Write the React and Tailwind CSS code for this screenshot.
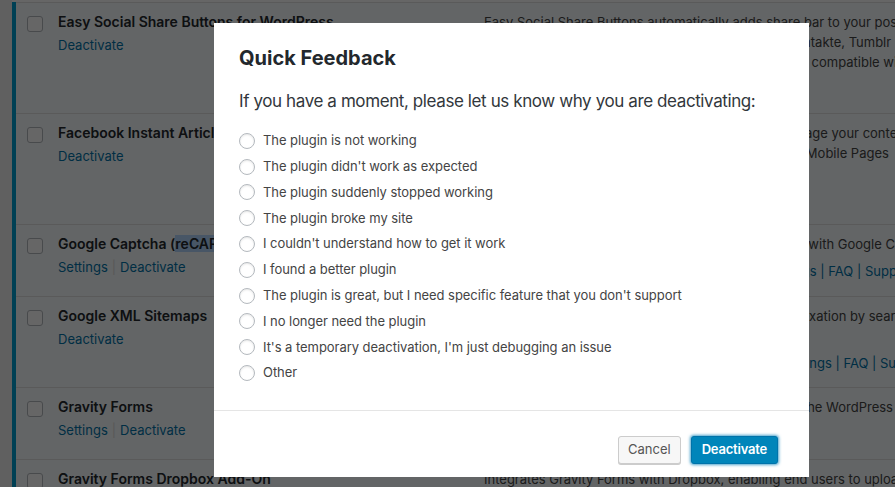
import { useState } from 'react';

const reasons = [
  "The plugin is not working",
  "The plugin didn't work as expected",
  "The plugin suddenly stopped working",
  "The plugin broke my site",
  "I couldn't understand how to get it work",
  "I found a better plugin",
  "The plugin is great, but I need specific feature that you don't support",
  "I no longer need the plugin",
  "It's a temporary deactivation, I'm just debugging an issue",
  "Other",
];

const plugins = [
  {
    name: 'Easy Social Share Buttons for WordPress',
    actions: ['Deactivate'],
    h: 'h-[111px]',
    desc: [
      'Easy Social Share Buttons automatically adds share bar to your post',
      'or pages with the support of Facebook, Twitter, VKontakte, Tumblr',
      'Easy Social Share Buttons for WordPress is now fully compatible with',
    ],
    links: null,
  },
  {
    name: 'Facebook Instant Articles for WP',
    actions: ['Deactivate'],
    h: 'h-[111px]',
    desc: [
      'Add support for Instant Articles on Facebook to manage your content',
      "Facebook Instant Articles and Google's Accelerated Mobile Pages",
    ],
    links: null,
  },
  {
    name: 'Google Captcha (reCAPTCHA) by BestWebSoft',
    select: true,
    actions: ['Settings', 'Deactivate'],
    h: 'h-[72px]',
    desc: ['Protect WordPress website forms from spam entries with Google Captcha'],
    links: 'Version 1.28 | By BestWebSoft | View details | Settings | FAQ | Support',
  },
  {
    name: 'Google XML Sitemaps',
    actions: ['Deactivate'],
    h: 'h-[91px]',
    desc: [
      'This plugin generates an XML sitemap for better indexation by search',
      'engines like Google, Bing, Yahoo and Ask.com.',
    ],
    links: 'Version 4.0.9 | By Arne Brachhold | Homepage | Settings | FAQ | Support',
  },
  {
    name: 'Gravity Forms',
    actions: ['Settings', 'Deactivate'],
    h: 'h-[72px]',
    desc: ['Easily create forms and manage form entries within the WordPress admin.'],
    links: null,
  },
  {
    name: 'Gravity Forms Dropbox Add-On',
    actions: ['Deactivate'],
    h: 'h-[60px]',
    desc: ['Integrates Gravity Forms with Dropbox, enabling end users to upload files'],
    links: null,
  },
];

function PluginRow({ p }) {
  return (
    <div className={`flex border-t border-[#e1e1e1] bg-[#f7fcfe] ${p.h}`}>
      <div className="w-[42px] shrink-0 pl-[11px] pt-[13px]">
        <div className="w-4 h-4 rounded-[3px] border border-[#b4b9be] bg-white" />
      </div>
      <div className="w-[426px] shrink-0 pt-[9px] overflow-hidden">
        <div className="text-[14px] leading-5 font-semibold text-[#23282d] whitespace-nowrap">
          {p.select ? (
            <>
              Google Captcha (<span className="bg-[#b3d7ff]">reCAPTCHA) by BestWebSoft</span>
            </>
          ) : (
            p.name
          )}
        </div>
        <div className="mt-[3px] text-[13px] leading-5 text-[#0073aa] whitespace-nowrap">
          {p.actions.map((a, i) => (
            <span key={a}>
              {i > 0 && <span className="text-[#ddd] mx-[4px]">|</span>}
              {a}
            </span>
          ))}
        </div>
      </div>
      <div className="flex-1 min-w-0 overflow-hidden pt-[9px] text-[13px] leading-5 text-[#444] whitespace-nowrap">
        {p.desc.map((d) => (
          <div key={d}>{d}</div>
        ))}
        {p.links && <div className="mt-[7px] text-[#0073aa]">{p.links}</div>}
      </div>
    </div>
  );
}

export default function App() {
  const [choice, setChoice] = useState(null);

  return (
    <div className="relative w-[895px] h-[487px] overflow-hidden bg-[#f1f1f1] font-['Inter','Noto_Sans',sans-serif]">
      {/* plugin list behind the dialog */}
      <div className="pl-3">
        <div className="h-[2px] bg-white" />
        <div className="border-l-4 border-[#00a0d2] flex flex-col">
          {plugins.map((p) => (
            <PluginRow key={p.name} p={p} />
          ))}
        </div>
      </div>

      {/* dim overlay */}
      <div className="absolute inset-0 bg-black/60" />

      {/* feedback dialog */}
      <div className="absolute left-[214px] top-[23px] w-[595px] h-[454px] bg-white flex flex-col">
        <div className="px-[25px] pt-[21px] pb-[24px]">
          <h2 className="text-[20px] leading-7 font-bold text-[#23282d]">Quick Feedback</h2>
          <p className="mt-[17px] text-[17px] leading-6 tracking-[-0.4px] text-[#32373c]">
            If you have a moment, please let us know why you are deactivating:
          </p>
          <ul className="mt-[15px]">
            {reasons.map((r, i) => (
              <li key={r} className="h-[25.8px] flex items-center">
                <label className="flex items-center gap-[8px] cursor-pointer" onClick={() => setChoice(i)}>
                  <span className="w-4 h-4 rounded-full border border-[#b4b9be] bg-white shadow-[inset_0_1px_2px_rgba(0,0,0,0.1)] flex items-center justify-center">
                    {choice === i && <span className="w-[6px] h-[6px] rounded-full bg-[#1e8cbe]" />}
                  </span>
                  <span className="text-[13px] tracking-[-0.05px] text-[#444]">{r}</span>
                </label>
              </li>
            ))}
          </ul>
        </div>
        <div className="mt-auto border-t border-[#e5e5e5] pt-[25px] pb-[14px] pr-[31px] flex justify-end gap-[10px]">
          <button className="h-[28px] px-[9px] rounded-[3px] border border-[#ccc] bg-[#f7f7f7] text-[13px] text-[#555] shadow-[0_1px_0_#ccc]">
            Cancel
          </button>
          <button className="h-[28px] px-[10px] rounded-[3px] border border-[#0073aa] bg-[#0085ba] text-[13px] font-semibold tracking-[-0.2px] text-white shadow-[0_0_3px_1px_rgba(30,140,190,0.8)]">
            Deactivate
          </button>
        </div>
      </div>
    </div>
  );
}
